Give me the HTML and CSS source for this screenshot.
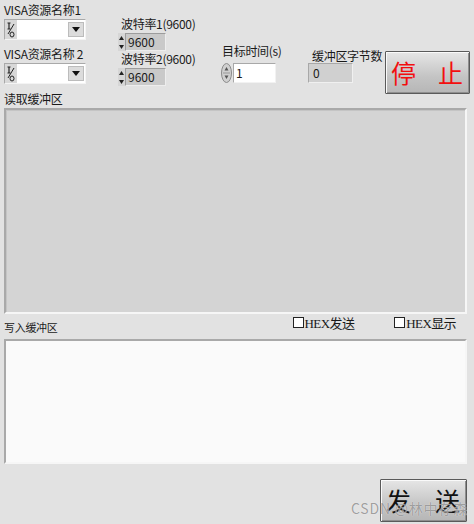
FILE: index.html
```html
<!DOCTYPE html>
<html lang="zh">
<head>
<meta charset="utf-8">
<title>串口调试</title>
<link rel="stylesheet" href="styles.css">
</head>
<body>
<div class="panel">
  <div class="top">
    <div class="col col-visa">
      <div class="lbl">VISA资源名称1</div>
      <div class="visa">
        <span class="visa-icon"><svg width="10" height="18" viewBox="0 0 10 18"><line x1="3" y1="2" x2="3" y2="8" stroke="#222" stroke-width="1.2"/><line x1="1.5" y1="2" x2="4.5" y2="2" stroke="#222"/><line x1="1.5" y1="8" x2="4.5" y2="8" stroke="#222"/><line x1="8" y1="3" x2="2" y2="13" stroke="#222"/><ellipse cx="6" cy="13.5" rx="2" ry="2.5" fill="none" stroke="#222"/></svg></span>
        <span class="visa-field"></span>
        <span class="visa-btn"><svg width="8" height="5" viewBox="0 0 8 5"><path d="M0 0H8L4 5Z" fill="#111"/></svg></span>
      </div>
      <div class="lbl lbl-2">VISA资源名称 2</div>
      <div class="visa">
        <span class="visa-icon"><svg width="10" height="18" viewBox="0 0 10 18"><line x1="3" y1="2" x2="3" y2="8" stroke="#222" stroke-width="1.2"/><line x1="1.5" y1="2" x2="4.5" y2="2" stroke="#222"/><line x1="1.5" y1="8" x2="4.5" y2="8" stroke="#222"/><line x1="8" y1="3" x2="2" y2="13" stroke="#222"/><ellipse cx="6" cy="13.5" rx="2" ry="2.5" fill="none" stroke="#222"/></svg></span>
        <span class="visa-field"></span>
        <span class="visa-btn"><svg width="8" height="5" viewBox="0 0 8 5"><path d="M0 0H8L4 5Z" fill="#111"/></svg></span>
      </div>
    </div>

    <div class="col col-baud">
      <div class="lbl lbl-indent">波特率1(9600)</div>
      <div class="num">
        <span class="arrows"><svg width="7" height="17" viewBox="0 0 7 17"><path d="M3.5 2L6 6H1Z" fill="#222"/><path d="M3.5 15L6 11H1Z" fill="#222"/></svg></span>
        <span class="num-field">9600</span>
      </div>
      <div class="lbl lbl-indent lbl-tight">波特率2(9600)</div>
      <div class="num">
        <span class="arrows"><svg width="7" height="17" viewBox="0 0 7 17"><path d="M3.5 2L6 6H1Z" fill="#222"/><path d="M3.5 15L6 11H1Z" fill="#222"/></svg></span>
        <span class="num-field">9600</span>
      </div>
    </div>

    <div class="col col-time">
      <div class="lbl lbl-indent">目标时间(s)</div>
      <div class="num">
        <span class="knob"><svg width="11" height="20" viewBox="0 0 11 20"><ellipse cx="5.5" cy="10" rx="5" ry="9.5" fill="#d0d0d0" stroke="#8a8a8a"/><path d="M5.5 4L7.5 7.5H3.5Z" fill="#555"/><path d="M5.5 16L7.5 12.5H3.5Z" fill="#555"/><line x1="2" y1="10" x2="9" y2="10" stroke="#999"/></svg></span>
        <span class="time-field">1</span>
      </div>
    </div>

    <div class="col col-count">
      <div class="lbl lbl-indent">缓冲区字节数</div>
      <div class="ind-field">0</div>
    </div>

    <div class="col col-stop">
      <button class="big-btn stop"><span>停</span><span>止</span></button>
    </div>
  </div>

  <div class="lbl lbl-read">读取缓冲区</div>
  <div class="read-box"></div>

  <div class="write-head">
    <span class="lbl lbl-small">写入缓冲区</span>
    <span class="checks">
      <span class="chk"><span class="box"></span>HEX发送</span>
      <span class="chk"><span class="box"></span>HEX显示</span>
    </span>
  </div>
  <div class="write-box"></div>

  <div class="bottom">
    <button class="big-btn send"><span>发</span><span>送</span></button>
  </div>

  <div class="mark">CSDN @林中存森</div>
</div>
</body>
</html>
```

FILE: styles.css
```css
html, body {
  margin: 0;
  padding: 0;
  background: #e2e2e2;
}

body {
  font-family: "Noto Sans CJK SC", "Noto Sans", sans-serif;
  font-size: 12px;
  color: #1a1a1a;
}

.panel {
  position: relative;
  width: 474px;
  height: 524px;
  box-sizing: border-box;
  padding: 0 7px 0 4px;
  overflow: hidden;
}

.lbl {
  font-size: 12px;
  line-height: 14px;
  height: 14px;
  white-space: nowrap;
  letter-spacing: -0.3px;
}

/* ---------- top controls ---------- */
.top {
  display: flex;
  align-items: flex-start;
  height: 91px;
}

.col {
  display: flex;
  flex-direction: column;
  flex: none;
}

.col-visa {
  width: 82px;
  padding-top: 3px;
}

.col-visa .lbl-2 {
  margin-top: 7px;
}

.visa {
  margin-top: 2px;
  height: 21px;
  width: 82px;
  display: flex;
  box-sizing: border-box;
  border: 1px solid #a9a9a9;
  border-right-color: #f4f4f4;
  border-bottom-color: #f4f4f4;
  background: #fff;
}

.visa-icon {
  width: 12px;
  background: #d8d8d8;
  display: flex;
  align-items: center;
  justify-content: center;
}

.visa-field {
  flex: 1;
  background: #fff;
}

.visa-btn {
  width: 14px;
  margin: 2px 1px 2px 0;
  background: #dcdcdc;
  border: 1px solid #bcbcbc;
  display: flex;
  align-items: center;
  justify-content: center;
}

.col-baud {
  width: 103px;
  margin-left: 32px;
  padding-top: 17px;
}

.lbl-indent {
  margin-left: 3px;
}

.col-baud .lbl-tight {
  margin-top: 1px;
}

.num {
  display: flex;
  margin-top: 2px;
}

.arrows {
  width: 7px;
  height: 18px;
  display: flex;
  align-items: center;
  background: #d6d6d6;
}

.num-field {
  width: 41px;
  height: 18px;
  box-sizing: border-box;
  border: 1px solid #9c9c9c;
  border-right-color: #ededed;
  border-bottom-color: #ededed;
  background: #c9c9c9;
  padding-left: 2px;
  line-height: 16px;
  font-size: 12px;
}

.col-time {
  width: 87px;
  padding-top: 44px;
}

.col-time .lbl-indent {
  margin-left: 1px;
}

.col-time .num {
  margin-top: 5px;
}

.knob {
  width: 12px;
  height: 20px;
  display: flex;
  align-items: center;
}

.time-field {
  width: 43px;
  height: 20px;
  box-sizing: border-box;
  border: 1px solid #a8a8a8;
  border-right-color: #f2f2f2;
  border-bottom-color: #f2f2f2;
  background: #fff;
  padding-left: 2px;
  line-height: 18px;
}

.col-count {
  width: 77px;
  padding-top: 49px;
}

.col-count .lbl-indent {
  margin-left: 4px;
}

.ind-field {
  width: 45px;
  height: 20px;
  box-sizing: border-box;
  border: 1px solid #a8a8a8;
  border-right-color: #f0f0f0;
  border-bottom-color: #f0f0f0;
  background: #d0d0d0;
  padding-left: 4px;
  line-height: 18px;
}

.col-stop {
  padding-top: 51px;
}

/* ---------- big buttons ---------- */
.big-btn {
  display: flex;
  justify-content: space-between;
  align-items: center;
  box-sizing: border-box;
  width: 85px;
  height: 43px;
  padding: 0 6px 0 5px;
  border: 1px solid #5a5a5a;
  border-radius: 1px;
  background: linear-gradient(#e6e6e6, #c4c4c4 60%, #b6b6b6);
  box-shadow: inset 1px 1px 0 #fafafa, inset -1px -1px 0 #8e8e8e;
  font-family: "Noto Sans CJK SC", sans-serif;
  font-size: 25px;
  line-height: 1;
}

.stop {
  color: #f20f0f;
}

.send {
  width: 87px;
  color: #111;
}

/* ---------- buffers ---------- */
.lbl-read {
  margin-top: 1px;
}

.read-box {
  margin-top: 2px;
  height: 206px;
  box-sizing: border-box;
  background: #d4d4d4;
  border: 2px solid #a9a9a9;
  border-right-color: #f6f6f6;
  border-bottom-color: #f6f6f6;
  box-shadow: inset 1px 1px 0 #c4c4c4;
}

.write-head {
  display: flex;
  justify-content: space-between;
  align-items: flex-start;
  height: 25px;
}

.lbl-small {
  font-size: 11px;
  margin-top: 6px;
}

.checks {
  display: flex;
  gap: 40px;
  margin-top: 2px;
  margin-right: 11px;
}

.chk {
  display: flex;
  align-items: flex-start;
  font-family: "Liberation Serif", "Noto Sans CJK SC", serif;
  font-size: 13px;
  line-height: 16px;
  letter-spacing: -0.6px;
}

.chk .box {
  width: 9px;
  height: 9px;
  margin-top: 1px;
  margin-right: 1px;
  border: 1px solid #222;
  background: #fff;
}

.write-box {
  height: 125px;
  box-sizing: border-box;
  background: #fafafa;
  border: 2px solid #a9a9a9;
  border-right-color: #f6f6f6;
  border-bottom-color: #f6f6f6;
}

.bottom {
  display: flex;
  justify-content: flex-end;
  margin-top: 15px;
}

/* semi-transparent signature laid over the lower-right corner */
.mark {
  position: absolute;
  right: 6px;
  bottom: 6px;
  font-family: "Noto Sans CJK SC", sans-serif;
  font-size: 14px;
  letter-spacing: 0.8px;
  color: rgba(130, 130, 130, 0.75);
  text-shadow: 0 0 1px rgba(255, 255, 255, 0.9);
  white-space: nowrap;
}
```
